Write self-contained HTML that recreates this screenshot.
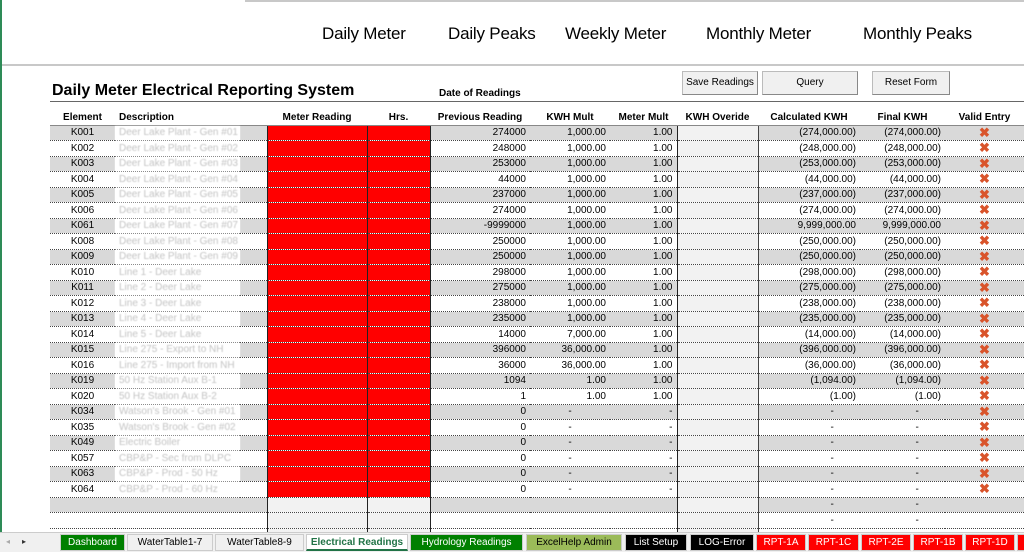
<!DOCTYPE html>
<html><head><meta charset="utf-8"><style>
*{margin:0;padding:0;box-sizing:border-box}
body{width:1024px;height:552px;overflow:hidden;background:#fff;font-family:"Liberation Sans",sans-serif;position:relative;font-size:10px;color:#000}
.abs{position:absolute}
.nav{top:24px;font-size:17px;letter-spacing:-0.2px}
.btn{position:absolute;top:71px;height:24px;background:#f0f0f0;border:1px solid #bbb;border-right-color:#888;border-bottom-color:#888;font-size:10px;text-align:center;line-height:22px}
table{position:absolute;left:50px;top:111px;border-collapse:collapse;table-layout:fixed;width:974px}
td,th{height:15.5px;line-height:13px;padding:0 4px;white-space:nowrap;overflow:hidden;font-size:10px}
th{font-weight:bold;height:14px;text-align:center;border-bottom:1px solid #888}
tr.d td{border-bottom:1px dotted #444}
tr.g td{background:#d9d9d9}
td.c{text-align:center}
td.r{text-align:right}
td.desc{background:#fff!important;color:#c4c4c4;filter:blur(0.6px)}
td.red{background:#f00!important;border-left:1px solid #222}
td.lg{background:#f2f2f2!important;border-left:1px solid #222}
td.ov{background:#f2f2f2!important;border-left:1px solid #222;border-right:1px solid #444}
td.bl{border-left:1px solid #222}
td.x{text-align:center;color:#d9542b;font-weight:bold;font-size:13px;line-height:10px}
.tab{position:absolute;top:534px;height:17px;font-size:10px;line-height:16px;text-align:center;border:1px solid #ccc}
.wrap{position:absolute;left:0;top:0;width:1024px;height:532px;overflow:hidden}
</style></head><body>
<div class="wrap">
<div class="abs" style="left:0;top:0;width:2px;height:552px;background:#2e8b57"></div>
<div class="abs" style="left:245px;top:0;width:779px;height:2px;background:#c8c8c8"></div>
<div class="abs" style="left:2px;top:64px;width:1022px;height:2px;background:#c8c8c8"></div>
<div class="abs nav" style="left:322px">Daily Meter</div>
<div class="abs nav" style="left:448px">Daily Peaks</div>
<div class="abs nav" style="left:565px">Weekly Meter</div>
<div class="abs nav" style="left:706px">Monthly Meter</div>
<div class="abs nav" style="left:863px">Monthly Peaks</div>
<div class="abs" style="left:52px;top:82px;font-size:16px;font-weight:bold">Daily Meter Electrical Reporting System</div>
<div class="abs" style="left:439px;top:88px;font-size:10px;font-weight:bold">Date of Readings</div>
<div class="abs" style="left:50px;top:101px;width:974px;height:1px;background:#666"></div>
<div class="btn" style="left:682px;width:76px">Save Readings</div>
<div class="btn" style="left:762px;width:96px">Query</div>
<div class="btn" style="left:872px;width:78px">Reset Form</div>
<table>
<colgroup><col style="width:65px"><col style="width:125px"><col style="width:27px"><col style="width:100px"><col style="width:63px"><col style="width:100px"><col style="width:80px"><col style="width:67px"><col style="width:81px"><col style="width:102px"><col style="width:85px"><col style="width:79px"></colgroup>
<tr><th>Element</th><th style="text-align:left">Description</th><th></th><th>Meter Reading</th><th>Hrs.</th><th>Previous Reading</th><th>KWH Mult</th><th>Meter Mult</th><th>KWH Overide</th><th>Calculated KWH</th><th>Final KWH</th><th>Valid Entry</th></tr>
<tr class="d g"><td class="c">K001</td><td class="desc">Deer Lake Plant - Gen #01</td><td></td><td class="red"></td><td class="red"></td><td class="r bl">274000</td><td class="r">1,000.00</td><td class="r">1.00</td><td class="ov"></td><td class="r">(274,000.00)</td><td class="r">(274,000.00)</td><td class="x">✖</td></tr>
<tr class="d"><td class="c">K002</td><td class="desc">Deer Lake Plant - Gen #02</td><td></td><td class="red"></td><td class="red"></td><td class="r bl">248000</td><td class="r">1,000.00</td><td class="r">1.00</td><td class="ov"></td><td class="r">(248,000.00)</td><td class="r">(248,000.00)</td><td class="x">✖</td></tr>
<tr class="d g"><td class="c">K003</td><td class="desc">Deer Lake Plant - Gen #03</td><td></td><td class="red"></td><td class="red"></td><td class="r bl">253000</td><td class="r">1,000.00</td><td class="r">1.00</td><td class="ov"></td><td class="r">(253,000.00)</td><td class="r">(253,000.00)</td><td class="x">✖</td></tr>
<tr class="d"><td class="c">K004</td><td class="desc">Deer Lake Plant - Gen #04</td><td></td><td class="red"></td><td class="red"></td><td class="r bl">44000</td><td class="r">1,000.00</td><td class="r">1.00</td><td class="ov"></td><td class="r">(44,000.00)</td><td class="r">(44,000.00)</td><td class="x">✖</td></tr>
<tr class="d g"><td class="c">K005</td><td class="desc">Deer Lake Plant - Gen #05</td><td></td><td class="red"></td><td class="red"></td><td class="r bl">237000</td><td class="r">1,000.00</td><td class="r">1.00</td><td class="ov"></td><td class="r">(237,000.00)</td><td class="r">(237,000.00)</td><td class="x">✖</td></tr>
<tr class="d"><td class="c">K006</td><td class="desc">Deer Lake Plant - Gen #06</td><td></td><td class="red"></td><td class="red"></td><td class="r bl">274000</td><td class="r">1,000.00</td><td class="r">1.00</td><td class="ov"></td><td class="r">(274,000.00)</td><td class="r">(274,000.00)</td><td class="x">✖</td></tr>
<tr class="d g"><td class="c">K061</td><td class="desc">Deer Lake Plant - Gen #07</td><td></td><td class="red"></td><td class="red"></td><td class="r bl">-9999000</td><td class="r">1,000.00</td><td class="r">1.00</td><td class="ov"></td><td class="r">9,999,000.00</td><td class="r">9,999,000.00</td><td class="x">✖</td></tr>
<tr class="d"><td class="c">K008</td><td class="desc">Deer Lake Plant - Gen #08</td><td></td><td class="red"></td><td class="red"></td><td class="r bl">250000</td><td class="r">1,000.00</td><td class="r">1.00</td><td class="ov"></td><td class="r">(250,000.00)</td><td class="r">(250,000.00)</td><td class="x">✖</td></tr>
<tr class="d g"><td class="c">K009</td><td class="desc">Deer Lake Plant - Gen #09</td><td></td><td class="red"></td><td class="red"></td><td class="r bl">250000</td><td class="r">1,000.00</td><td class="r">1.00</td><td class="ov"></td><td class="r">(250,000.00)</td><td class="r">(250,000.00)</td><td class="x">✖</td></tr>
<tr class="d"><td class="c">K010</td><td class="desc">Line 1 - Deer Lake</td><td></td><td class="red"></td><td class="red"></td><td class="r bl">298000</td><td class="r">1,000.00</td><td class="r">1.00</td><td class="ov"></td><td class="r">(298,000.00)</td><td class="r">(298,000.00)</td><td class="x">✖</td></tr>
<tr class="d g"><td class="c">K011</td><td class="desc">Line 2 - Deer Lake</td><td></td><td class="red"></td><td class="red"></td><td class="r bl">275000</td><td class="r">1,000.00</td><td class="r">1.00</td><td class="ov"></td><td class="r">(275,000.00)</td><td class="r">(275,000.00)</td><td class="x">✖</td></tr>
<tr class="d"><td class="c">K012</td><td class="desc">Line 3 - Deer Lake</td><td></td><td class="red"></td><td class="red"></td><td class="r bl">238000</td><td class="r">1,000.00</td><td class="r">1.00</td><td class="ov"></td><td class="r">(238,000.00)</td><td class="r">(238,000.00)</td><td class="x">✖</td></tr>
<tr class="d g"><td class="c">K013</td><td class="desc">Line 4 - Deer Lake</td><td></td><td class="red"></td><td class="red"></td><td class="r bl">235000</td><td class="r">1,000.00</td><td class="r">1.00</td><td class="ov"></td><td class="r">(235,000.00)</td><td class="r">(235,000.00)</td><td class="x">✖</td></tr>
<tr class="d"><td class="c">K014</td><td class="desc">Line 5 - Deer Lake</td><td></td><td class="red"></td><td class="red"></td><td class="r bl">14000</td><td class="r">7,000.00</td><td class="r">1.00</td><td class="ov"></td><td class="r">(14,000.00)</td><td class="r">(14,000.00)</td><td class="x">✖</td></tr>
<tr class="d g"><td class="c">K015</td><td class="desc">Line 275 - Export to NH</td><td></td><td class="red"></td><td class="red"></td><td class="r bl">396000</td><td class="r">36,000.00</td><td class="r">1.00</td><td class="ov"></td><td class="r">(396,000.00)</td><td class="r">(396,000.00)</td><td class="x">✖</td></tr>
<tr class="d"><td class="c">K016</td><td class="desc">Line 275 - Import from NH</td><td></td><td class="red"></td><td class="red"></td><td class="r bl">36000</td><td class="r">36,000.00</td><td class="r">1.00</td><td class="ov"></td><td class="r">(36,000.00)</td><td class="r">(36,000.00)</td><td class="x">✖</td></tr>
<tr class="d g"><td class="c">K019</td><td class="desc">50 Hz Station Aux B-1</td><td></td><td class="red"></td><td class="red"></td><td class="r bl">1094</td><td class="r">1.00</td><td class="r">1.00</td><td class="ov"></td><td class="r">(1,094.00)</td><td class="r">(1,094.00)</td><td class="x">✖</td></tr>
<tr class="d"><td class="c">K020</td><td class="desc">50 Hz Station Aux B-2</td><td></td><td class="red"></td><td class="red"></td><td class="r bl">1</td><td class="r">1.00</td><td class="r">1.00</td><td class="ov"></td><td class="r">(1.00)</td><td class="r">(1.00)</td><td class="x">✖</td></tr>
<tr class="d g"><td class="c">K034</td><td class="desc">Watson's Brook - Gen #01</td><td></td><td class="red"></td><td class="red"></td><td class="r bl">0</td><td class="c">-</td><td class="r">-</td><td class="ov"></td><td class="r">-&nbsp;&nbsp;&nbsp;&nbsp;&nbsp;&nbsp;&nbsp;&nbsp;</td><td class="r">-&nbsp;&nbsp;&nbsp;&nbsp;&nbsp;&nbsp;&nbsp;&nbsp;</td><td class="x">✖</td></tr>
<tr class="d"><td class="c">K035</td><td class="desc">Watson's Brook - Gen #02</td><td></td><td class="red"></td><td class="red"></td><td class="r bl">0</td><td class="c">-</td><td class="r">-</td><td class="ov"></td><td class="r">-&nbsp;&nbsp;&nbsp;&nbsp;&nbsp;&nbsp;&nbsp;&nbsp;</td><td class="r">-&nbsp;&nbsp;&nbsp;&nbsp;&nbsp;&nbsp;&nbsp;&nbsp;</td><td class="x">✖</td></tr>
<tr class="d g"><td class="c">K049</td><td class="desc">Electric Boiler</td><td></td><td class="red"></td><td class="red"></td><td class="r bl">0</td><td class="c">-</td><td class="r">-</td><td class="ov"></td><td class="r">-&nbsp;&nbsp;&nbsp;&nbsp;&nbsp;&nbsp;&nbsp;&nbsp;</td><td class="r">-&nbsp;&nbsp;&nbsp;&nbsp;&nbsp;&nbsp;&nbsp;&nbsp;</td><td class="x">✖</td></tr>
<tr class="d"><td class="c">K057</td><td class="desc">CBP&amp;P - Sec from DLPC</td><td></td><td class="red"></td><td class="red"></td><td class="r bl">0</td><td class="c">-</td><td class="r">-</td><td class="ov"></td><td class="r">-&nbsp;&nbsp;&nbsp;&nbsp;&nbsp;&nbsp;&nbsp;&nbsp;</td><td class="r">-&nbsp;&nbsp;&nbsp;&nbsp;&nbsp;&nbsp;&nbsp;&nbsp;</td><td class="x">✖</td></tr>
<tr class="d g"><td class="c">K063</td><td class="desc">CBP&amp;P - Prod - 50 Hz</td><td></td><td class="red"></td><td class="red"></td><td class="r bl">0</td><td class="c">-</td><td class="r">-</td><td class="ov"></td><td class="r">-&nbsp;&nbsp;&nbsp;&nbsp;&nbsp;&nbsp;&nbsp;&nbsp;</td><td class="r">-&nbsp;&nbsp;&nbsp;&nbsp;&nbsp;&nbsp;&nbsp;&nbsp;</td><td class="x">✖</td></tr>
<tr class="d"><td class="c">K064</td><td class="desc">CBP&amp;P - Prod - 60 Hz</td><td></td><td class="red"></td><td class="red"></td><td class="r bl">0</td><td class="c">-</td><td class="r">-</td><td class="ov"></td><td class="r">-&nbsp;&nbsp;&nbsp;&nbsp;&nbsp;&nbsp;&nbsp;&nbsp;</td><td class="r">-&nbsp;&nbsp;&nbsp;&nbsp;&nbsp;&nbsp;&nbsp;&nbsp;</td><td class="x">✖</td></tr>
<tr class="d g"><td></td><td></td><td></td><td class="lg"></td><td class="lg"></td><td class="bl"></td><td></td><td></td><td class="ov"></td><td class="r">-&nbsp;&nbsp;&nbsp;&nbsp;&nbsp;&nbsp;&nbsp;&nbsp;</td><td class="r">-&nbsp;&nbsp;&nbsp;&nbsp;&nbsp;&nbsp;&nbsp;&nbsp;</td><td></td></tr>
<tr class="d"><td></td><td></td><td></td><td class="lg"></td><td class="lg"></td><td class="bl"></td><td></td><td></td><td class="ov"></td><td class="r">-&nbsp;&nbsp;&nbsp;&nbsp;&nbsp;&nbsp;&nbsp;&nbsp;</td><td class="r">-&nbsp;&nbsp;&nbsp;&nbsp;&nbsp;&nbsp;&nbsp;&nbsp;</td><td></td></tr>
<tr><td style="height:20px"></td><td></td><td></td><td class="lg"></td><td class="lg"></td><td class="bl"></td><td></td><td></td><td class="ov"></td><td></td><td></td><td></td></tr>
</table>
</div>
<div class="abs" style="left:0;top:532px;width:1024px;height:20px;background:#f0f0f0;border-top:1px solid #ccc"></div>
<div class="abs" style="left:6px;top:537px;font-size:8px;color:#aaa">◂</div>
<div class="abs" style="left:22px;top:537px;font-size:8px;color:#333">▸</div>
<div class="tab" style="left:60px;width:65px;background:#008000;color:#fff">Dashboard</div>
<div class="tab" style="left:127px;width:86px;background:#f0f0f0">WaterTable1-7</div>
<div class="tab" style="left:215px;width:89px;background:#f0f0f0">WaterTable8-9</div>
<div class="tab" style="left:306px;width:102px;background:#fff;color:#217346;font-weight:bold;border-bottom:2px solid #217346">Electrical Readings</div>
<div class="tab" style="left:410px;width:113px;background:#008000;color:#fff">Hydrology Readings</div>
<div class="tab" style="left:526px;width:96px;background:#9bbb59">ExcelHelp Admin</div>
<div class="tab" style="left:625px;width:62px;background:#000;color:#fff">List Setup</div>
<div class="tab" style="left:690px;width:64px;background:#000;color:#fff">LOG-Error</div>
<div class="tab" style="left:756px;width:50px;background:#f00;color:#fff">RPT-1A</div>
<div class="tab" style="left:808px;width:51px;background:#f00;color:#fff">RPT-1C</div>
<div class="tab" style="left:861px;width:50px;background:#f00;color:#fff">RPT-2E</div>
<div class="tab" style="left:913px;width:50px;background:#f00;color:#fff">RPT-1B</div>
<div class="tab" style="left:965px;width:50px;background:#f00;color:#fff">RPT-1D</div>
<div class="tab" style="left:1017px;width:10px;background:#f00"></div>
</body></html>
